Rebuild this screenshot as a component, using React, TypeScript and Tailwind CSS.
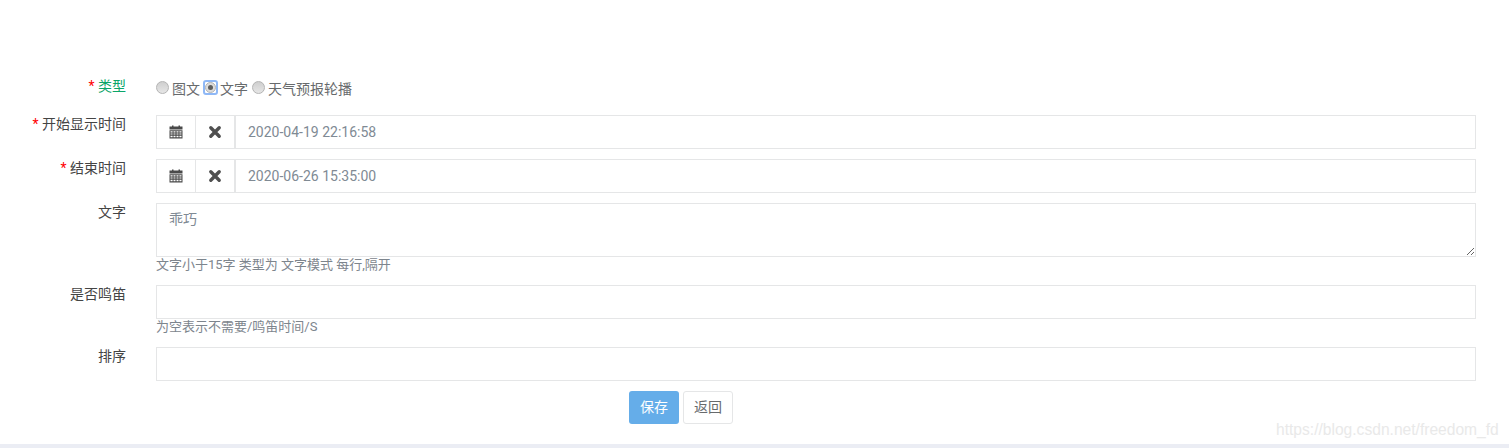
const font = { sans: 'font-["Roboto","Noto_Sans_CJK_SC",sans-serif]' };

function Radio({ checked }: { checked?: boolean }) {
  return (
    <span
      className={
        checked
          ? 'flex h-[15px] w-[15px] items-center justify-center rounded-[3px] border-2 border-[#8fb8f6]'
          : 'flex h-[13px] w-[13px] items-center justify-center'
      }
    >
      <span
        className={
          checked
            ? 'flex h-[11px] w-[11px] shrink-0 items-center justify-center rounded-full border border-[#b4b4b4] bg-[#dcdcdc]'
            : 'flex h-[13px] w-[13px] shrink-0 items-center justify-center rounded-full border border-[#b4b4b4] bg-gradient-to-b from-[#cfcfcf] to-[#e6e6e6]'
        }
      >
        {checked && <span className="h-[5px] w-[5px] rounded-full bg-[#5e5e5e]" />}
      </span>
    </span>
  );
}

function CalendarIcon() {
  return (
    <svg width="14" height="14" viewBox="0 0 14 14" fill="#4a4a4a">
      <path d="M0.5 1.5H3V0.5H4.5V1.5H9.5V0.5H11V1.5H13.5V4.5H0.5Z" />
      <path d="M0.5 5.2H13.5V13.5H0.5ZM1.5 6.2V7.4H3.6V6.2ZM4.5 6.2V7.4H6.5V6.2ZM7.5 6.2V7.4H9.5V6.2ZM10.4 6.2V7.4H12.5V6.2ZM1.5 8.6V9.6H3.6V8.6ZM4.5 8.6V9.6H6.5V8.6ZM7.5 8.6V9.6H9.5V8.6ZM10.4 8.6V9.6H12.5V8.6ZM1.5 10.8V12.2H3.6V10.8ZM4.5 10.8V12.2H6.5V10.8ZM7.5 10.8V12.2H9.5V10.8ZM10.4 10.8V12.2H12.5V10.8Z" fillRule="evenodd" />
    </svg>
  );
}

function CloseIcon() {
  return (
    <svg width="14" height="14" viewBox="0 0 14 14" stroke="#4f4f4f" strokeWidth="3.4" strokeLinecap="round">
      <path d="M2.8 2.8L11.2 11.2M11.2 2.8L2.8 11.2" />
    </svg>
  );
}

function Label({ text, required, green }: { text: string; required?: boolean; green?: boolean }) {
  return (
    <div className={green ? 'text-right text-[14px] leading-[16px] text-[#444444]' : 'pt-[1px] text-right text-[14px] leading-[16px] text-[#444444]'}>
      {required && <span className="text-[#ff0000]">* </span>}
      <span className={green ? 'text-[#0ba568]' : ''}>{text}</span>
    </div>
  );
}

function DateInput({ value }: { value: string }) {
  return (
    <div className="flex h-[34px] border border-[#e5e6e7] text-[14px] text-[#808a94]">
      <div className="flex w-[39px] items-center justify-center border-r border-[#e5e6e7]">
        <CalendarIcon />
      </div>
      <div className="flex w-[40px] items-center justify-center border-r-2 border-[#e5e6e7]">
        <CloseIcon />
      </div>
      <div className="flex flex-1 items-center pl-[12px]">{value}</div>
    </div>
  );
}

function Help({ text }: { text: string }) {
  return <div className="h-[18px] text-[13px] leading-[16px] text-[#7d858d]">{text}</div>;
}

export default function App() {
  return (
    <div className={`relative h-[448px] overflow-hidden bg-white ${font.sans}`}>
      <form className="grid grid-cols-[126px_1fr] gap-x-[30px] pr-[33px] pt-[78px]">
        <Label text="类型" required green />
        <div className="mb-[17px] flex h-[20px] items-center text-[14px] text-[#676a6c]">
          <span className="mb-[2px]"><Radio /></span>
          <span className="ml-[3px] mr-[3px] pt-[2px]">图文</span>
          <span className="mb-[2px]"><Radio checked /></span>
          <span className="ml-[2px] mr-[4px] pt-[2px]">文字</span>
          <span className="mb-[2px]"><Radio /></span>
          <span className="ml-[3px] pt-[2px]">天气预报轮播</span>
        </div>

        <Label text="开始显示时间" required />
        <div className="mb-[10px]">
          <DateInput value="2020-04-19 22:16:58" />
        </div>

        <Label text="结束时间" required />
        <div className="mb-[10px]">
          <DateInput value="2020-06-26 15:35:00" />
        </div>

        <Label text="文字" />
        <div className="mb-[10px]">
          <textarea
            defaultValue="乖巧"
            className="block h-[54px] w-full border border-[#e5e6e7] px-[12px] py-[5px] text-[14px] text-[#808a94] outline-none"
          />
          <Help text="文字小于15字 类型为 文字模式 每行,隔开" />
        </div>

        <Label text="是否鸣笛" />
        <div className="mb-[10px]">
          <input className="block h-[34px] w-full border border-[#e5e6e7] px-[12px] outline-none" />
          <Help text="为空表示不需要/鸣笛时间/S" />
        </div>

        <Label text="排序" />
        <div className="mb-[10px]">
          <input className="block h-[34px] w-full border border-[#e5e6e7] px-[12px] outline-none" />
        </div>
      </form>

      <div className="flex justify-center gap-[4px] pr-[147px] text-[14px]">
        <button className="h-[33px] w-[50px] rounded-[3px] bg-[#65ade9] text-white">保存</button>
        <button className="h-[33px] w-[50px] rounded-[3px] border border-[#e5e6e7] bg-white text-[#676a6c]">返回</button>
      </div>

      <div className="absolute inset-x-0 bottom-0 h-[4px] bg-[#ebedf4]" />
      <div className="absolute bottom-[8px] left-[1276px] text-[15.6px] leading-[20px] text-[#e9e9e9] font-['Liberation_Sans',sans-serif]">
        https://blog.csdn.net/freedom_fd
      </div>
    </div>
  );
}
